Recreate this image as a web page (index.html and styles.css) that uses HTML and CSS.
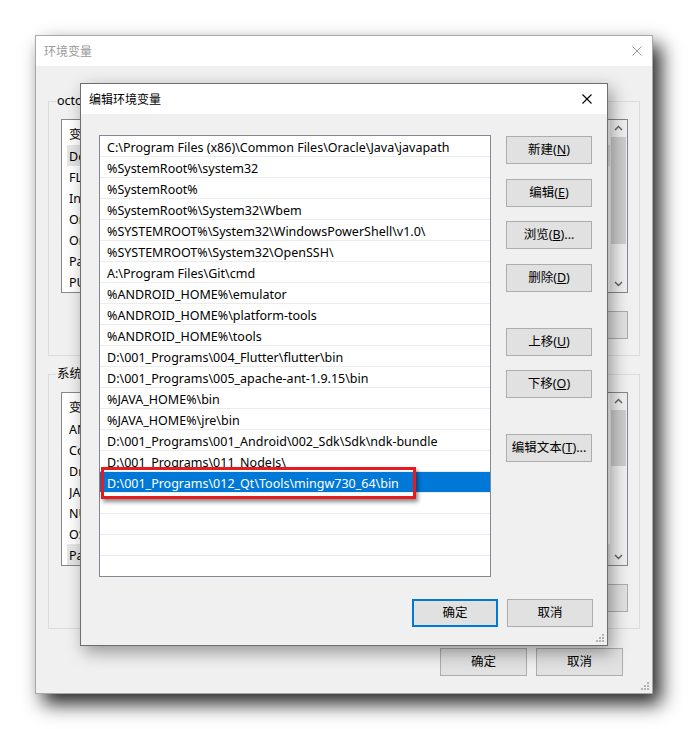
FILE: index.html
```html
<!DOCTYPE html>
<html lang="zh-CN">
<head>
<meta charset="utf-8">
<title>编辑环境变量</title>
<link rel="stylesheet" href="styles.css">
</head>
<body>
<div class="win outer">
  <div class="titlebar">
    <span class="title">环境变量</span>
    <svg class="close" width="10" height="10" viewBox="0 0 10 10"><path d="M0.5 0.5L9.5 9.5M9.5 0.5L0.5 9.5" stroke="currentColor" stroke-width="1"/></svg>
  </div>
  <div class="wbody">
    <fieldset class="group">
      <legend>octopus 的用户变量(<u>U</u>)</legend>
      <div class="lv">
        <div class="lv-main">
          <div class="lv-head"><span class="c1">变量</span></div>
          <div class="lv-row sel"><span class="c1">DevEco</span></div>
          <div class="lv-row"><span class="c1">FLUTTER</span></div>
          <div class="lv-row"><span class="c1">IntelliJ</span></div>
          <div class="lv-row"><span class="c1">OneDrive</span></div>
          <div class="lv-row"><span class="c1">OneDriveConsumer</span></div>
          <div class="lv-row"><span class="c1">Path</span></div>
          <div class="lv-row"><span class="c1">PUB_HOSTED_URL</span></div>
        </div>
        <div class="vscroll">
          <svg class="arrow" width="17" height="17" viewBox="0 0 17 17"><path d="M5 10L8.5 6.5L12 10" fill="none" stroke="#606060" stroke-width="1.4"/></svg>
          <div class="track"><div class="thumb t1"></div></div>
          <svg class="arrow" width="17" height="17" viewBox="0 0 17 17"><path d="M5 7L8.5 10.5L12 7" fill="none" stroke="#606060" stroke-width="1.4"/></svg>
        </div>
      </div>
      <div class="grp-btns">
        <button class="btn">新建(<u>N</u>)...</button>
        <button class="btn">编辑(<u>E</u>)...</button>
        <button class="btn">删除(<u>D</u>)</button>
      </div>
    </fieldset>

    <fieldset class="group g2">
      <legend>系统变量(<u>S</u>)</legend>
      <div class="lv">
        <div class="lv-main">
          <div class="lv-head"><span class="c1">变量</span></div>
          <div class="lv-row"><span class="c1">ANDROID_HOME</span></div>
          <div class="lv-row"><span class="c1">ComSpec</span></div>
          <div class="lv-row"><span class="c1">DriverData</span></div>
          <div class="lv-row"><span class="c1">JAVA_HOME</span></div>
          <div class="lv-row"><span class="c1">NUMBER_OF</span></div>
          <div class="lv-row"><span class="c1">OS</span></div>
          <div class="lv-row sel"><span class="c1">Path</span></div>
        </div>
        <div class="vscroll">
          <svg class="arrow" width="17" height="17" viewBox="0 0 17 17"><path d="M5 10L8.5 6.5L12 10" fill="none" stroke="#606060" stroke-width="1.4"/></svg>
          <div class="track"><div class="thumb t2"></div></div>
          <svg class="arrow" width="17" height="17" viewBox="0 0 17 17"><path d="M5 7L8.5 10.5L12 7" fill="none" stroke="#606060" stroke-width="1.4"/></svg>
        </div>
      </div>
      <div class="grp-btns">
        <button class="btn">新建(<u>W</u>)...</button>
        <button class="btn">编辑(<u>I</u>)...</button>
        <button class="btn">删除(<u>L</u>)</button>
      </div>
    </fieldset>

    <div class="dlg-btns outer-btns">
      <button class="btn">确定</button>
      <button class="btn">取消</button>
    </div>
  </div>
  <svg class="grip" width="8" height="8" viewBox="0 0 8 8"><rect x="6" y="0" width="2" height="2"/><rect x="3" y="3" width="2" height="2"/><rect x="6" y="3" width="2" height="2"/><rect x="0" y="6" width="2" height="2"/><rect x="3" y="6" width="2" height="2"/><rect x="6" y="6" width="2" height="2"/></svg>
</div>

<div class="win inner">
  <div class="titlebar">
    <span class="title">编辑环境变量</span>
    <svg class="close" width="10" height="10" viewBox="0 0 10 10"><path d="M0.5 0.5L9.5 9.5M9.5 0.5L0.5 9.5" stroke="currentColor" stroke-width="1.1"/></svg>
  </div>
  <div class="ibody">
    <div class="ibody-top">
      <div class="plist">
        <div class="pitem">C:\Program Files (x86)\Common Files\Oracle\Java\javapath</div>
        <div class="pitem">%SystemRoot%\system32</div>
        <div class="pitem">%SystemRoot%</div>
        <div class="pitem">%SystemRoot%\System32\Wbem</div>
        <div class="pitem">%SYSTEMROOT%\System32\WindowsPowerShell\v1.0\</div>
        <div class="pitem">%SYSTEMROOT%\System32\OpenSSH\</div>
        <div class="pitem">A:\Program Files\Git\cmd</div>
        <div class="pitem">%ANDROID_HOME%\emulator</div>
        <div class="pitem">%ANDROID_HOME%\platform-tools</div>
        <div class="pitem">%ANDROID_HOME%\tools</div>
        <div class="pitem">D:\001_Programs\004_Flutter\flutter\bin</div>
        <div class="pitem">D:\001_Programs\005_apache-ant-1.9.15\bin</div>
        <div class="pitem">%JAVA_HOME%\bin</div>
        <div class="pitem">%JAVA_HOME%\jre\bin</div>
        <div class="pitem">D:\001_Programs\001_Android\002_Sdk\Sdk\ndk-bundle</div>
        <div class="pitem">D:\001_Programs\011_NodeJs\</div>
        <div class="pitem psel">D:\001_Programs\012_Qt\Tools\mingw730_64\bin</div>
        <div class="pitem"></div>
        <div class="pitem"></div>
        <div class="pitem"></div>
        <div class="pitem"></div>
      </div>
      <div class="side-btns">
        <button class="btn">新建(<u>N</u>)</button>
        <button class="btn">编辑(<u>E</u>)</button>
        <button class="btn">浏览(<u>B</u>)...</button>
        <button class="btn">删除(<u>D</u>)</button>
        <button class="btn sp">上移(<u>U</u>)</button>
        <button class="btn">下移(<u>O</u>)</button>
        <button class="btn sp">编辑文本(<u>T</u>)...</button>
      </div>
    </div>
    <div class="dlg-btns inner-btns">
      <button class="btn default">确定</button>
      <button class="btn">取消</button>
    </div>
  </div>
  <svg class="grip" width="8" height="8" viewBox="0 0 8 8"><rect x="6" y="0" width="2" height="2"/><rect x="3" y="3" width="2" height="2"/><rect x="6" y="3" width="2" height="2"/><rect x="0" y="6" width="2" height="2"/><rect x="3" y="6" width="2" height="2"/><rect x="6" y="6" width="2" height="2"/></svg>
</div>

<div class="redbox"></div>
</body>
</html>
```

FILE: styles.css
```css
* { box-sizing: border-box; }

html, body {
  margin: 0;
  padding: 0;
  background: #ffffff;
}

body {
  position: relative;
  width: 688px;
  height: 729px;
  overflow: hidden;
  font-family: "Noto Sans", "Noto Sans CJK SC", sans-serif;
  font-size: 12px;
  color: #000;
}

u { text-decoration: underline; text-underline-offset: 1px; }

.win {
  position: absolute;
  display: flex;
  flex-direction: column;
  background: #f0f0f0;
}

.outer {
  left: 35px;
  top: 35px;
  width: 618px;
  height: 659px;
  border: 1px solid #a8a8a8;
  box-shadow: 8px 10px 18px rgba(0, 0, 0, 0.85);
}

.inner {
  left: 80px;
  top: 83px;
  width: 528px;
  height: 563px;
  border: 1px solid #6e6e6e;
  box-shadow: 4px 6px 16px rgba(0, 0, 0, 0.38);
}

.titlebar {
  height: 30px;
  flex: none;
  background: #ffffff;
  display: flex;
  align-items: center;
  justify-content: space-between;
  padding: 0 10px 0 8px;
}

.title {
  font-family: "Noto Sans CJK SC", sans-serif;
  font-size: 12px;
  line-height: 16px;
}

.outer .title { color: #9a9a9a; }
.outer .close { color: #9a9a9a; }
.inner .close { color: #000; margin-right: 5px; }

/* outer window body */
.wbody {
  flex: 1;
  display: flex;
  flex-direction: column;
  padding: 0 0 0 12px;
}

.group {
  margin: 27px 0 0 0;
  width: 592px;
  border: 1px solid #dcdcdc;
  padding: 10px 11px 16px 12px;
  min-width: 0;
}

.group.g2 { margin-top: 10px; }

.group legend {
  padding: 0 1px;
  margin-left: -5px;
  font-family: "Noto Sans", "Noto Sans CJK SC", sans-serif;
  font-size: 12.5px;
  line-height: 16px;
}

.lv {
  display: flex;
  border: 1px solid #828790;
  background: #ffffff;
}

.lv-main {
  flex: 1;
  min-width: 0;
  padding-left: 5px;
  overflow: hidden;
  font-size: 12.5px;
}

.lv-head {
  height: 25px;
  display: flex;
  align-items: center;
  padding-left: 2px;
  padding-top: 2px;
  white-space: nowrap;
}

.lv-row {
  height: 21px;
  display: flex;
  align-items: center;
  padding-left: 2px;
  padding-top: 1px;
  white-space: nowrap;
}

.lv-row.sel { background: #e5e5e5; }

.c1 { width: 210px; flex: none; overflow: hidden; }

.vscroll {
  width: 17px;
  flex: none;
  display: flex;
  flex-direction: column;
  background: #f0f0f0;
}

.arrow { display: block; flex: none; }

.track { flex: 1; padding: 0 1px; }

.thumb { background: #cdcdcd; }
.t1 { height: 107px; }
.t2 { height: 56px; }

.grp-btns {
  margin-top: 18px;
  display: flex;
  justify-content: flex-end;
  gap: 9px;
}

.btn {
  width: 86px;
  height: 28px;
  padding: 0;
  margin: 0;
  background: #e1e1e1;
  border: 1px solid #adadad;
  border-radius: 0;
  font-family: "Noto Sans", "Noto Sans CJK SC", sans-serif;
  font-size: 12.5px;
  color: #000;
  line-height: 16px;
}

.btn.default { border: 2px solid #0078d7; }

.dlg-btns {
  display: flex;
  justify-content: flex-end;
  gap: 9px;
}

.outer-btns {
  margin-top: 19px;
  padding-right: 29px;
}

.outer-btns .btn { width: 87px; }

/* inner dialog */
.ibody {
  flex: 1;
  display: flex;
  flex-direction: column;
  padding: 21px 14px 0 18px;
}

.ibody-top {
  display: flex;
  gap: 15px;
}

.plist {
  width: 392px;
  border: 1px solid #828790;
  background: #ffffff;
  font-size: 12.5px;
}

.pitem {
  height: 21px;
  line-height: 17px;
  padding-top: 3px;
  border-bottom: 1px solid #ececec;
  padding-left: 7px;
  white-space: nowrap;
  overflow: hidden;
}

.pitem:last-child { border-bottom: none; height: 20px; }

.pitem.psel {
  background: #0078d7;
  color: #ffffff;
}

.side-btns {
  display: flex;
  flex-direction: column;
  gap: 14.67px;
  padding-top: 1px;
}

.side-btns .btn { flex: none; }
.side-btns .btn.sp { margin-top: 21px; }

.inner-btns {
  margin-top: 22px;
}

.grip {
  position: absolute;
  right: 3px;
  bottom: 3px;
  fill: #b4b4b4;
}

.redbox {
  position: absolute;
  left: 101px;
  top: 467px;
  width: 315px;
  height: 32px;
  border: 3px solid #e41b1f;
  box-shadow: 2px 3px 4px rgba(0, 0, 0, 0.45);
}
```
